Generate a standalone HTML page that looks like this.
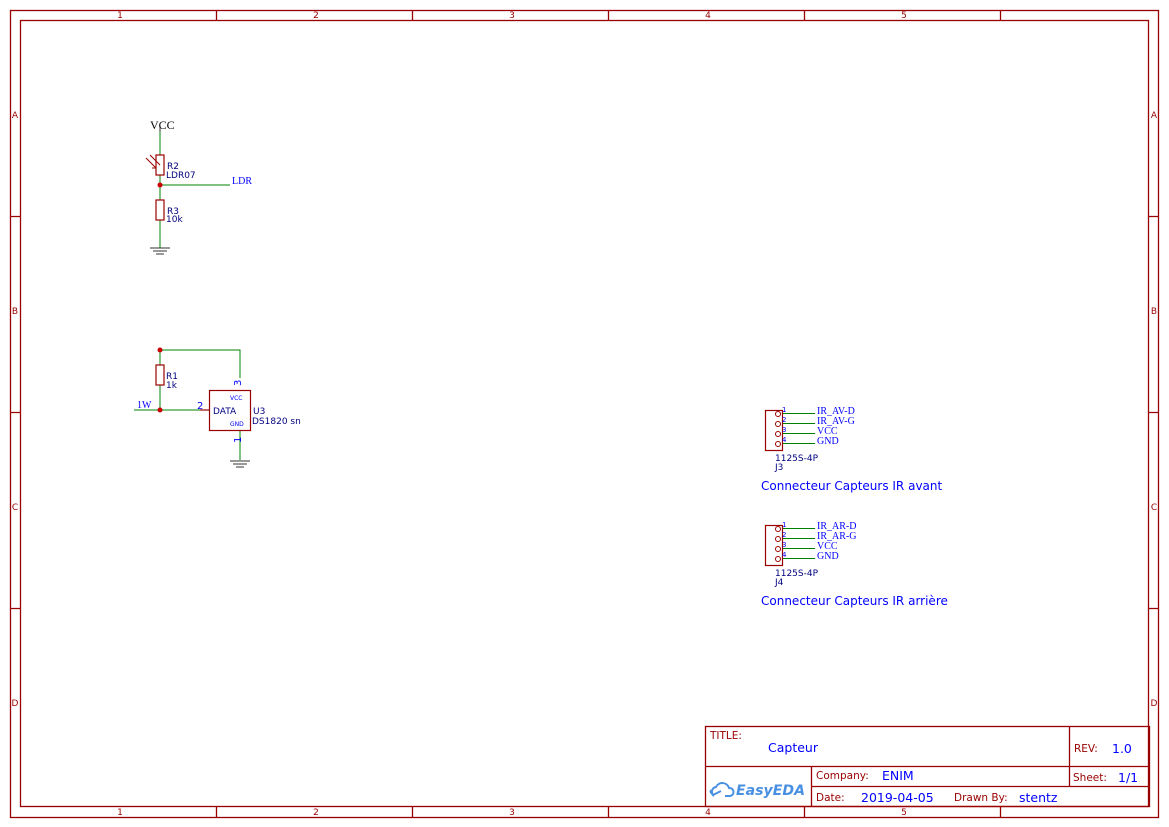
<!DOCTYPE html>
<html><head><meta charset="utf-8"><style>
html,body{margin:0;padding:0;background:#fff;}
svg{display:block;}
text{font-family:"DejaVu Sans","Liberation Sans",sans-serif;}
.s text, text.s{font-family:"Liberation Serif",serif;}
</style></head><body>
<svg width="1169" height="827" viewBox="0 0 1169 827" xmlns="http://www.w3.org/2000/svg">
<g fill="none" stroke="#990000" stroke-width="1.3">
<rect x="10.5" y="10.5" width="1148" height="807"/>
<rect x="20.5" y="20.5" width="1128" height="786"/>
<path d="M216.5 10v10M412.5 10v10M608.5 10v10M804.5 10v10M1000.5 10v10M216.5 807v10M412.5 807v10M608.5 807v10M804.5 807v10M1000.5 807v10M10 216.5h10M10 412.5h10M10 608.5h10M1149 216.5h10M1149 412.5h10M1149 608.5h10"/>
<rect x="705.5" y="726.5" width="444" height="80"/>
<path d="M705 766.5h444M1069.5 726v60M811.5 766v40M811 786.5h258M1069 786.5h80"/>
</g>
<g fill="#990000" font-size="9" text-anchor="middle">
<text x="120" y="18">1</text><text x="316" y="18">2</text><text x="512" y="18">3</text><text x="708" y="18">4</text><text x="904" y="18">5</text>
<text x="120" y="815">1</text><text x="316" y="815">2</text><text x="512" y="815">3</text><text x="708" y="815">4</text><text x="904" y="815">5</text>
<text x="15" y="118">A</text><text x="15" y="314">B</text><text x="15" y="510">C</text><text x="15" y="706">D</text>
<text x="1154" y="118">A</text><text x="1154" y="314">B</text><text x="1154" y="510">C</text><text x="1154" y="706">D</text>
</g>
<g font-size="10.5" fill="#990000">
<text x="710" y="739">TITLE:</text>
<text x="1074" y="752">REV:</text>
<text x="1073" y="781">Sheet:</text>
<text x="816" y="779">Company:</text>
<text x="816" y="801">Date:</text>
<text x="954" y="801">Drawn By:</text>
</g>
<g font-size="12.5" fill="#0000ff">
<text x="768" y="752">Capteur</text>
<text x="1112" y="753">1.0</text>
<text x="1118" y="782">1/1</text>
<text x="882" y="780">ENIM</text>
<text x="861" y="802">2019-04-05</text>
<text x="1019" y="802">stentz</text>
<text x="761" y="490" font-size="12">Connecteur Capteurs IR avant</text>
<text x="761" y="605" font-size="12">Connecteur Capteurs IR arrière</text>
</g>
<g fill="none" stroke="#4a90e2" stroke-width="2"><path d="M714 796 a5 5 0 0 1 2-9 a7 7 0 0 1 13 1 a4 4 0 0 1 1 8 h-5 M711 790 a3 3 0 0 0 4 4 l6-3"/></g>
<text x="736" y="795" font-size="14.5" font-style="italic" font-weight="bold" fill="#4a90e2" textLength="69" lengthAdjust="spacingAndGlyphs">EasyEDA</text>

<g stroke="#008000" stroke-width="1" fill="none">
<path d="M160 132v23M160 175v25M160 220v28M160 185h70"/>
<path d="M160 350h80v28M160 350v15M160 385v25M134 410h66M240 430v30"/>
</g>
<g stroke="#990000" stroke-width="1.2" fill="none">
<rect x="156" y="155" width="8" height="20"/><rect x="156" y="200" width="8" height="20"/>
<rect x="156" y="365" width="8" height="20"/>
<path d="M146 158l10 10M150 155l10 10M152 168h4v-3M156 165v3" stroke-width="1"/>
<rect x="209.5" y="390.5" width="41" height="40"/>
<path d="M200 410h9"/>
</g>
<g stroke="#333" stroke-width="1"><path d="M160 126v6M150 248h20M153 251h14M156 254h8M230 461h20M233 464h14M236 467h8"/></g>
<g fill="#cc0000"><circle cx="160" cy="185" r="2.5"/><circle cx="160" cy="350" r="2.5"/><circle cx="160" cy="410" r="2.5"/></g>
<text class="s" x="150" y="129" font-size="12" fill="#000">VCC</text>
<g font-size="9" fill="#000080">
<text x="167" y="169">R2</text><text x="166" y="178">LDR07</text>
<text x="167" y="214">R3</text><text x="166" y="222">10k</text>
<text x="166" y="379">R1</text><text x="166" y="388">1k</text>
<text x="213" y="414">DATA</text>
<text x="253" y="414">U3</text><text x="252" y="424">DS1820 sn</text>
<text x="775" y="461">1125S-4P</text><text x="775" y="470">J3</text>
<text x="775" y="576">1125S-4P</text><text x="775" y="585">J4</text>
</g>
<g font-size="6" fill="#0000ff"><text x="230" y="400">VCC</text><text x="230" y="426">GND</text></g>
<g font-size="10" fill="#0000ff"><text x="197" y="409">2</text>
<text x="241" y="386" transform="rotate(-90 241 386)" >3</text>
<text x="241" y="443" transform="rotate(-90 241 443)">1</text></g>
<g class="s" font-size="10" fill="#0000ff">
<text x="232" y="184">LDR</text><text x="137" y="408">1W</text>
<text x="817" y="414">IR_AV-D</text><text x="817" y="424">IR_AV-G</text><text x="817" y="434">VCC</text><text x="817" y="444">GND</text>
<text x="817" y="529">IR_AR-D</text><text x="817" y="539">IR_AR-G</text><text x="817" y="549">VCC</text><text x="817" y="559">GND</text>
</g>
<g id="c1">
<rect x="765.5" y="410.5" width="17" height="40" fill="none" stroke="#990000" stroke-width="1.2"/>
<g fill="none" stroke="#990000"><circle cx="778" cy="414" r="2.5"/><circle cx="778" cy="424" r="2.5"/><circle cx="778" cy="434" r="2.5"/><circle cx="778" cy="444" r="2.5"/></g>
<path d="M783 413.5h32M783 423.5h32M783 433.5h32M783 443.5h32" stroke="#008000"/>
<g font-size="7" fill="#0000ff"><text x="782" y="412">1</text><text x="782" y="422">2</text><text x="782" y="432">3</text><text x="782" y="442">4</text></g>
</g>
<use href="#c1" transform="translate(0 115)"/>
</svg>
</body></html>
